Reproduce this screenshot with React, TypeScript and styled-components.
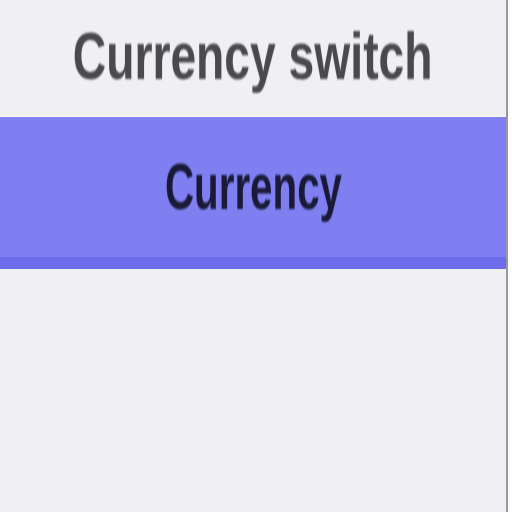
import styled, { createGlobalStyle } from 'styled-components'

const GlobalStyle = createGlobalStyle`
  html, body {
    margin: 0;
    padding: 0;
    background: #ffffff;
  }
  body {
    font-family: 'Liberation Sans', Arial, sans-serif;
  }
`

const Panel = styled.div`
  width: 506px;
  height: 512px;
  background: #efeff4;
  border-right: 2px solid #98989c;
  display: flex;
  flex-direction: column;
`

const Header = styled.div`
  height: 117px;
  box-sizing: border-box;
  padding-bottom: 6px;
  display: flex;
  align-items: center;
  justify-content: center;
  border-bottom: 1px solid #fafaf6;
`

const Title = styled.h1`
  margin: 0;
  font-size: 67px;
  font-weight: 700;
  color: #4a4a4e;
  transform: scaleX(0.69);
  white-space: nowrap;
  filter: blur(0.9px);
`

const Item = styled.div<{ $active?: boolean }>`
  height: 140px;
  display: flex;
  align-items: center;
  justify-content: center;
  background: ${({ $active }) => ($active ? '#7f7ff1' : 'transparent')};
  border-bottom: 12px solid ${({ $active }) => ($active ? '#6d6deb' : 'transparent')};
`

const ItemLabel = styled.span`
  font-size: 64px;
  font-weight: 700;
  color: #1a1a38;
  transform: scaleX(0.63);
  white-space: nowrap;
  filter: blur(0.9px);
`

export default function App() {
  return (
    <>
      <GlobalStyle />
      <Panel>
        <Header>
          <Title>Currency switch</Title>
        </Header>
        <Item $active>
          <ItemLabel>Currency</ItemLabel>
        </Item>
      </Panel>
    </>
  )
}
